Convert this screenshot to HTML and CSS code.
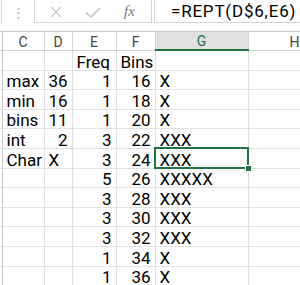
FILE: index.html
```html
<!DOCTYPE html>
<html lang="en">
<head>
    <meta charset="UTF-8">
    <title>REPT histogram</title>
    <link rel="stylesheet" href="styles.css">
</head>
<body>
    <div class="formula-bar">
        <div class="name-box"></div>
        <div class="grip">&#8942;</div>
        <div class="buttons">
            <svg class="icon cancel" width="14" height="12" viewBox="0 0 14 12"><path d="M2 1 L12 11 M12 1 L2 11" stroke="#c4c4c4" stroke-width="1.4" fill="none"/></svg>
            <svg class="icon enter" width="16" height="11" viewBox="0 0 16 11"><path d="M1 5.5 L6 10 L15 1" stroke="#c4c4c4" stroke-width="1.6" fill="none"/></svg>
            <span class="fx">fx</span>
        </div>
        <div class="formula">=REPT(D$6,E6)</div>
    </div>

    <table class="sheet">
        <colgroup>
            <col class="c-row"><col class="c-c"><col class="c-d"><col class="c-e"><col class="c-f"><col class="c-g"><col class="c-h">
        </colgroup>
        <thead>
            <tr>
                <th class="rowhead"></th>
                <th>C</th>
                <th>D</th>
                <th>E</th>
                <th>F</th>
                <th class="active">G</th>
                <th>H</th>
            </tr>
        </thead>
        <tbody>
            <tr><td class="rowhead"></td><td></td><td></td><td>Freq</td><td>Bins</td><td></td><td></td></tr>
            <tr><td class="rowhead"></td><td>max</td><td class="num">36</td><td class="num">1</td><td class="num">16</td><td>X</td><td></td></tr>
            <tr><td class="rowhead"></td><td>min</td><td class="num">16</td><td class="num">1</td><td class="num">18</td><td>X</td><td></td></tr>
            <tr><td class="rowhead"></td><td>bins</td><td class="num">11</td><td class="num">1</td><td class="num">20</td><td>X</td><td></td></tr>
            <tr><td class="rowhead"></td><td>int</td><td class="num">2</td><td class="num">3</td><td class="num">22</td><td>XXX</td><td></td></tr>
            <tr><td class="rowhead"></td><td>Char</td><td>X</td><td class="num">3</td><td class="num">24</td><td class="selected">XXX<span class="handle"></span></td><td></td></tr>
            <tr><td class="rowhead"></td><td></td><td></td><td class="num">5</td><td class="num">26</td><td>XXXXX</td><td></td></tr>
            <tr><td class="rowhead"></td><td></td><td></td><td class="num">3</td><td class="num">28</td><td>XXX</td><td></td></tr>
            <tr><td class="rowhead"></td><td></td><td></td><td class="num">3</td><td class="num">30</td><td>XXX</td><td></td></tr>
            <tr><td class="rowhead"></td><td></td><td></td><td class="num">3</td><td class="num">32</td><td>XXX</td><td></td></tr>
            <tr><td class="rowhead"></td><td></td><td></td><td class="num">1</td><td class="num">34</td><td>X</td><td></td></tr>
            <tr><td class="rowhead"></td><td></td><td></td><td class="num">1</td><td class="num">36</td><td>X</td><td></td></tr>
        </tbody>
    </table>
</body>
</html>
```

FILE: styles.css
```css
body { margin: 0; background: #fff; font-family: Roboto, "Liberation Sans", sans-serif; overflow: hidden; width: 300px; height: 285px; }

.formula-bar { height: 31px; display: flex; align-items: flex-start; }
.name-box { width: 1px; height: 22px; border-right: 1px solid #d4d4d4; border-bottom: 1px solid #d4d4d4; }
.grip { width: 32px; text-align: center; color: #b0b0b0; font-size: 13px; line-height: 13px; margin-top: 6px; }
.buttons { width: 116px; height: 22px; margin-top: -1px; border: 1px solid #d4d4d4; display: flex; align-items: center; }
.icon.cancel { margin-left: 14px; margin-top: 2px; }
.icon.enter { margin-left: 22px; margin-top: 3px; }
.fx { margin-left: 23px; font-family: "Liberation Serif", serif; font-style: italic; font-size: 15px; color: #7a7a7a; margin-top: 1px; }
.formula { margin-left: 2px; flex: 1; height: 22px; margin-top: -1px; border: 1px solid #d4d4d4; border-right: none; padding-left: 16px; font-size: 17px; line-height: 22px; color: #000; white-space: nowrap; letter-spacing: 0.8px; }

.sheet { border-collapse: collapse; table-layout: fixed; width: 341px; }
.c-row { width: 2px; }
.c-c { width: 42px; }
.c-d { width: 28px; }
.c-e { width: 44px; }
.c-f { width: 39px; }
.c-g { width: 93px; }
.c-h { width: 93px; }

.sheet th { height: 17px; padding: 0; font-weight: normal; font-size: 14px; color: #444; background: #fff; border: 1px solid #d4d4d4; border-top-color: #c8c8c8; line-height: 16px; vertical-align: bottom; }
.sheet th.active { background: #e1e1e1; color: #217346; border-bottom: 2px solid #217346; }
.sheet td { height: 18.6px; padding: 0 4px; font-size: 17px; line-height: 16px; color: #000; border: 1px solid #e1e1e1; vertical-align: bottom; white-space: nowrap; overflow: hidden; }
.sheet .rowhead { padding: 0; border-left: none; border-right-color: #c8c8c8; }
.sheet td.num { text-align: right; }
.sheet td.selected { position: relative; overflow: visible; outline: 2px solid #217346; outline-offset: -1px; }
.handle { position: absolute; right: -4px; bottom: -4px; width: 5px; height: 5px; background: #217346; border: 1px solid #fff; }
```
